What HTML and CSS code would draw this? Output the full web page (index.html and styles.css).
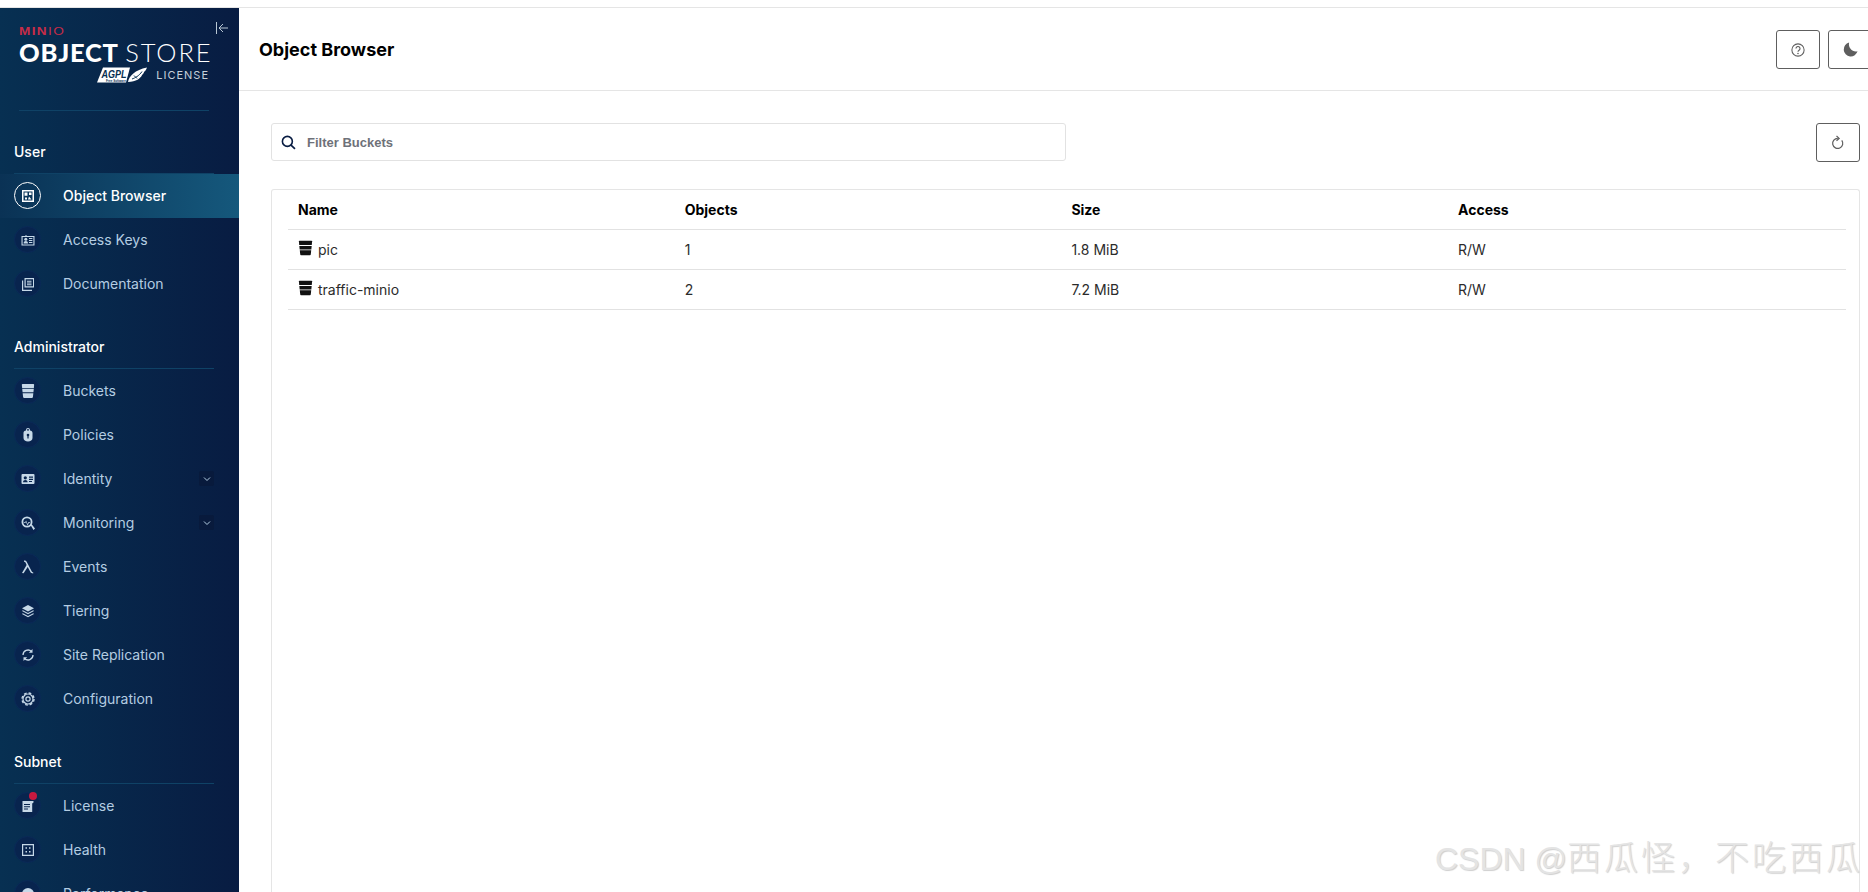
FILE: index.html
```html
<!DOCTYPE html>
<html lang="en">
<head>
<meta charset="utf-8">
<title>MinIO Object Store</title>
<link rel="stylesheet" href="styles.css">
</head>
<body>
<svg class="defs" width="0" height="0" aria-hidden="true">
  <symbol id="bucket" viewBox="0 0 16 16"><path d="M1 .8a.8.8 0 0 1 .8-.8h12.400a.8.8 0 0 1 .8.8L14.700 4.800H1.300z"/><path d="M1.400 5.800h13.200l-.4 3.700H1.800z"/><path d="M1.900 10.500h12.200l-.5 4.300a1.300 1.300 0 0 1-1.300 1.200H3.700a1.300 1.300 0 0 1-1.300-1.200z"/></symbol>
</svg>
<div class="topstrip"></div>
<div class="app">
  <aside class="sidebar">
    <button class="collapse" aria-label="Collapse">
      <svg viewBox="0 0 14 14" width="14" height="14"><path d="M1.500 1v12M13 7H4M8 3L4 7l4 4" fill="none" stroke="currentColor" stroke-width="1"/></svg>
    </button>
    <div class="logo">
      <div class="logo-minio"><span class="min">MIN</span><span class="io">IO</span></div>
      <div class="logo-title"><b>OBJECT</b> <span>STORE</span></div>
      <div class="logo-license">
        <svg class="agpl" viewBox="0 0 50 16" width="50" height="16">
          <path d="M6 .5h27l-4 15H0z" fill="#fff"/>
          <text x="4.500" y="10.500" class="agpl-text" textLength="25" lengthAdjust="spacingAndGlyphs">AGPL</text>
          <text x="9" y="14.500" class="agpl-small">Free Software</text>
          <path d="M31 15c1-6 7-12 19-14.500-1 3-2 3.500-3 4.500 0 1-1 2-2 3-1 3-6 7-14 7z" fill="#fff"/>
          <path d="M35 12c3-1 7-3 10-7.500M37 8.500l3 3" stroke="#073052" fill="none"/>
        </svg>
        <span class="license-word">LICENSE</span>
      </div>
    </div>

    <h3 class="section first">User</h3>
    <nav class="menu">
      <a class="item active"><span class="ico"><svg viewBox="0 0 14 14"><path fill-rule="evenodd" d="M1 1h12v12H1zM2.500 2.500v9h9v-9z"/><path d="M3.500 3.500h3v3.200h-3zM8 3.500h2.500v2.500H8zM4 8.500h2v2H4zM8 7.500l2.500 3H7z"/></svg></span><span>Object Browser</span></a>
      <a class="item"><span class="ico"><svg viewBox="0 0 14 14"><path fill-rule="evenodd" d="M.5 3h3.500l1-1 1 1h7.500v9.500H.5zM1.600 4v7.400h10.800V4z"/><circle cx="4.800" cy="6.300" r="1.500"/><path d="M2.600 10.500c0-3.200 4.400-3.200 4.400 0zM8 5h3.400v1.100H8zM8 7h3.400v1.100H8zM8 9h3.400v1.100H8z"/></svg></span><span>Access Keys</span></a>
      <a class="item"><span class="ico"><svg viewBox="0 0 14 14"><path fill-rule="evenodd" d="M3.500 1H13v9.500H3.500zM4.700 2.200v7.100H12V2.200z"/><path d="M1 3.500h1.200v9.300H11V14H1zM6 3.700h4.500v1H6zM6 5.500h4.500v1H6zM6 7.300h4.500v1H6z"/></svg></span><span>Documentation</span></a>
    </nav>

    <h3 class="section">Administrator</h3>
    <nav class="menu">
      <a class="item"><span class="ico"><svg viewBox="0 0 16 16"><use href="#bucket"/></svg></span><span>Buckets</span></a>
      <a class="item"><span class="ico"><svg viewBox="0 0 14 14"><path fill-rule="evenodd" d="M5 2.500V2a2 2 0 0 1 4 0v.500c1.500.3 2.500 1 2.500 2.500v5c0 2-2 3.500-4.500 3.500S2.500 12 2.500 10V5c0-1.500 1-2.200 2.500-2.500zM6 2.400h2V2a1 1 0 0 0-2 0z"/><circle cx="7" cy="7" r="1.300" fill="#0a2650"/><rect x="6.400" y="7.500" width="1.200" height="3" fill="#0a2650"/></svg></span><span>Policies</span></a>
      <a class="item"><span class="ico"><svg viewBox="0 0 14 14"><path fill-rule="evenodd" d="M1.500 2h11a1 1 0 0 1 1 1v8a1 1 0 0 1-1 1h-11a1 1 0 0 1-1-1V3a1 1 0 0 1 1-1zM8 4.500v1.200h4V4.500zM8 6.700v1.200h4V6.700zM8 8.900v1.200h3V8.900z"/><circle cx="4.300" cy="5.800" r="1.600" fill="#0a2650"/><path d="M2 10.300c0-3.200 4.600-3.200 4.600 0z" fill="#0a2650"/></svg></span><span>Identity</span><span class="chev"><svg viewBox="0 0 10 10" width="10" height="10"><path d="M2 3.500l3 3 3-3" fill="none" stroke="currentColor"/></svg></span></a>
      <a class="item"><span class="ico"><svg viewBox="0 0 14 14"><path fill-rule="evenodd" d="M6 .5a5.500 5.500 0 1 1 0 11 5.500 5.500 0 0 1 0-11zM6 2.300a3.700 3.700 0 1 0 0 7.400 3.700 3.700 0 0 0 0-7.400z"/><path d="M9.500 9l1-1 3.500 4.500-1.500 1.500zM2.800 6h1.500l.8-1.500L6.500 8l1-2h1.500v.7H8L6.500 9.500 5 6 4.700 6.700H2.800z"/></svg></span><span>Monitoring</span><span class="chev"><svg viewBox="0 0 10 10" width="10" height="10"><path d="M2 3.500l3 3 3-3" fill="none" stroke="currentColor"/></svg></span></a>
      <a class="item"><span class="ico"><svg viewBox="0 0 14 14"><path d="M1 13l4.600-8L4.500 2.500C4.200 2 3.800 1.800 3 1.800V.6c1.500 0 2.300.4 2.800 1.400l5 9.500c.3.500.6.700 1.400.7V13.400c-1.500 0-2.300-.4-2.800-1.400L6.700 7 2.600 13.300z"/></svg></span><span>Events</span></a>
      <a class="item"><span class="ico"><svg viewBox="0 0 14 14"><path d="M7 1l6 3.200-6 3.200-6-3.200z"/><path d="M1.800 6.200L7 9l5.200-2.800 .8 .9L7 10.300 1 7.100z"/><path d="M1.800 9.200L7 12l5.200-2.800 .8 .9L7 13.300 1 10.100z"/></svg></span><span>Tiering</span></a>
      <a class="item"><span class="ico"><svg viewBox="0 0 14 14"><path d="M2 7a5 5 0 0 1 8.500-3.500M12 7a5 5 0 0 1-8.500 3.500" fill="none" stroke="currentColor" stroke-width="1.300"/><path d="M11.500 1v3.700H7.800zM2.500 13V9.300h3.700z"/></svg></span><span>Site Replication</span></a>
      <a class="item"><span class="ico"><svg viewBox="0 0 14 14"><circle cx="7" cy="7" r="5" fill="none" stroke="currentColor" stroke-width="1.200"/><circle cx="7" cy="7" r="6" fill="none" stroke="currentColor" stroke-width="1.400" stroke-dasharray="2.700 2"/><circle cx="7" cy="7" r="2.100" fill="none" stroke="currentColor" stroke-width="1.200"/></svg></span><span>Configuration</span></a>
    </nav>

    <h3 class="section">Subnet</h3>
    <nav class="menu">
      <a class="item"><span class="ico"><svg viewBox="0 0 14 14"><path fill-rule="evenodd" d="M1.500 2h11v1.500l-1.300 1V13H1.500zM3 5v1h6V5zM3 7.300v1h6v-1zM3 9.600v1h4v-1z"/></svg><i class="dot"></i></span><span>License</span></a>
      <a class="item"><span class="ico"><svg viewBox="0 0 14 14"><path fill-rule="evenodd" d="M1 1h12v12H1zM2.200 2.200v9.600h9.600V2.200z"/><path d="M4.500 4.200h1.500v1.500H4.500zM8 4.200h1.500v1.500H8zM4.500 8h1.500v1.500H4.500zM8 8h1.500v1.500H8z"/></svg></span><span>Health</span></a>
      <a class="item"><span class="ico"><svg viewBox="0 0 14 14"><circle cx="7" cy="7" r="6"/></svg></span><span>Performance</span></a>
    </nav>
  </aside>

  <main class="main">
    <header class="pagehead">
      <h1 class="pagetitle">Object Browser</h1>
      <div class="head-actions">
        <button class="iconbtn" aria-label="Help"><svg viewBox="0 0 16 16" width="14" height="14"><circle cx="8" cy="8" r="7" fill="none" stroke="currentColor" stroke-width="1.200"/><path d="M5.700 6.300a2.300 2.300 0 1 1 3.500 2c-.8.500-1.200.8-1.200 1.700" fill="none" stroke="currentColor" stroke-width="1.300"/><circle cx="8" cy="12" r=".9" fill="currentColor"/></svg></button>
        <button class="iconbtn" aria-label="Dark mode"><svg viewBox="0 0 16 16" width="15" height="15"><path d="M6.500 .6a7.500 7.500 0 1 0 9 9.300c-4.700 1.500-10.400-3.200-9-9.300z" fill="currentColor"/></svg></button>
      </div>
    </header>
    <section class="content">
      <div class="toolbar">
        <label class="search">
          <svg viewBox="0 0 16 16" width="15" height="15"><circle cx="6.800" cy="6.800" r="5.300" fill="none" stroke="#081c42" stroke-width="1.700"/><path d="M10.700 10.700l4.200 4.200" stroke="#081c42" stroke-width="1.800"/></svg>
          <input class="search-input" type="text" placeholder="Filter Buckets">
        </label>
        <button class="iconbtn refresh" aria-label="Refresh"><svg viewBox="0 0 16 16" width="14" height="15"><path d="M12.300 5.500A5.800 5.800 0 1 1 7.800 3.200" fill="none" stroke="currentColor" stroke-width="1.400"/><path d="M6.300 .6l3 2.700-3 2.700" fill="none" stroke="currentColor" stroke-width="1.400"/></svg></button>
      </div>
      <div class="card">
        <div class="row head"><div>Name</div><div>Objects</div><div>Size</div><div>Access</div></div>
        <div class="row"><div class="namecell"><svg class="bucket" viewBox="0 0 16 16" width="15" height="16"><use href="#bucket"/></svg>pic</div><div>1</div><div>1.8 MiB</div><div>R/W</div></div>
        <div class="row"><div class="namecell"><svg class="bucket" viewBox="0 0 16 16" width="15" height="16"><use href="#bucket"/></svg>traffic-minio</div><div>2</div><div>7.2 MiB</div><div>R/W</div></div>
      </div>
    </section>
  </main>
</div>
<div class="watermark"><span class="wm-latin">CSDN @</span><span class="wm-cjk">西瓜怪，不吃西瓜</span></div>
</body>
</html>
```

FILE: styles.css
```css
* { box-sizing: border-box; }
html, body { margin: 0; height: 100%; overflow: hidden; background: #fff; }
body { font-family: Inter, "Liberation Sans", sans-serif; font-size: 14px; color: #000; display: flex; flex-direction: column; position: relative; }
.defs { position: absolute; }
.topstrip { height: 8px; flex: none; border-bottom: 1px solid #e5e5e5; }
.app { flex: 1; display: flex; min-height: 0; }

.sidebar { width: 239px; flex: none; position: relative; overflow: hidden; background: linear-gradient(90deg, #073052 0%, #081c42 100%); color: #fff; }
.collapse { position: absolute; left: 215px; top: 13px; width: 14px; height: 14px; padding: 0; border: 0; background: none; color: #b8c7d4; display: flex; }
.logo { margin: 0 30px 0 19px; height: 103px; padding-top: 20px; border-bottom: 1px solid #0f4266; width: 190px; }
.logo-minio { font-size: 10px; line-height: 8px; letter-spacing: 1px; height: 8px; font-family: "Liberation Sans", sans-serif; transform-origin: left; transform: scaleX(1.36); }
.min { color: #c72c48; font-weight: 700; }
.io { color: #c72c48; font-weight: 400; }
.logo-title { font-size: 25.500px; line-height: 26px; margin-top: 3px; white-space: nowrap; letter-spacing: .8px; font-family: Lato, Inter, sans-serif; }
.logo-title b { font-weight: 900; }
.logo-title span { font-weight: 300; letter-spacing: 1.900px; margin-left: -1px; }
.logo-license { display: flex; align-items: center; justify-content: flex-end; margin-top: 2px; gap: 9px; }
.agpl { flex: none; display: block; }
.agpl-text { font: italic 700 10.500px "Liberation Sans", sans-serif; fill: #073052; }
.agpl-small { font: 700 3px "Liberation Sans", sans-serif; fill: #073052; }
.license-word { font-size: 11px; line-height: 14px; letter-spacing: 1px; color: #c5d0da; }

.section { margin: 32px 25px 0 14px; height: 31px; font-size: 14px; line-height: 17px; font-weight: 500; color: #fff; border-bottom: 1px solid #0f4266; }
.menu { display: flex; flex-direction: column; }
.item { height: 44px; display: flex; align-items: center; padding: 0 25px 1px 14px; color: #b4cde2; font-size: 14px; }
.item.active { background: linear-gradient(90deg, #0a3255 0%, #15587c 100%); color: #fff; font-weight: 500; }
.ico { position: relative; width: 27px; height: 27px; border-radius: 50%; margin-right: 22px; background: #08244e; border: 1px solid #0a2a58; fill: #c6d8e8; color: #c6d8e8; display: flex; align-items: center; justify-content: center; flex: none; }
.ico svg { width: 14px; height: 14px; fill: inherit; }
.active .ico { background: transparent; border-color: #fff; fill: #fff; }
.dot { position: absolute; top: -1px; right: 3px; width: 8px; height: 8px; border-radius: 50%; background: #c7193f; }
.chev { margin-left: auto; width: 15px; height: 15px; border-radius: 2px; background: #081a3c; color: #b4cde2; display: flex; align-items: center; justify-content: center; }

.main { flex: 1; min-width: 0; display: flex; flex-direction: column; }
.pagehead { height: 83px; flex: none; border-bottom: 1px solid #e5e5e5; display: flex; align-items: center; justify-content: space-between; padding-left: 20px; padding-top: 2px; }
.pagetitle { margin: 0; font-size: 18px; line-height: 22px; font-weight: 700; color: #000; }
.head-actions { display: flex; gap: 8px; margin-right: -4px; margin-top: -1px; }
.iconbtn { width: 44px; height: 39px; padding: 0; background: #fff; border: 1px solid #5e5e5e; border-radius: 3px; color: #5e5e5e; display: flex; align-items: center; justify-content: center; }
.content { flex: 1; min-height: 0; padding: 32px 8px 0 32px; display: flex; flex-direction: column; }
.toolbar { display: flex; justify-content: space-between; align-items: flex-start; height: 66px; flex: none; }
.search { width: 795px; height: 38px; display: flex; align-items: center; gap: 11px; padding-left: 9px; border: 1px solid #e2e2e2; border-radius: 3px; }
.search-input { flex: 1; border: 0; outline: 0; padding: 0; font: 700 13px "Liberation Sans", sans-serif; color: #333; background: none; }
.search-input::placeholder { color: #6e7179; opacity: 1; }
.card { flex: 1; border: 1px solid #e5e5e5; border-bottom: 0; border-radius: 3px 3px 0 0; padding: 0 13px 0 16px; }
.row { display: grid; grid-template-columns: repeat(4, 386.700px); height: 40px; align-items: center; border-bottom: 1px solid #e2e2e2; font-size: 14px; color: #2b2b2b; width: 100%; }
.row > div { padding-left: 10px; }
.row.head { font-weight: 700; color: #000; }
.namecell { display: flex; align-items: center; gap: 5px; }
.bucket { fill: #111; flex: none; margin-top: -3px; }

.watermark { position: absolute; right: 5px; bottom: 5px; color: #e4e4e4; text-shadow: 1px 1px 1px #cfcfcf; white-space: nowrap; line-height: 44px; }
.wm-latin { font: 32px "Liberation Sans", sans-serif; }
.wm-cjk { font: 300 34px "Noto Sans CJK SC", sans-serif; letter-spacing: 3px; }
```
